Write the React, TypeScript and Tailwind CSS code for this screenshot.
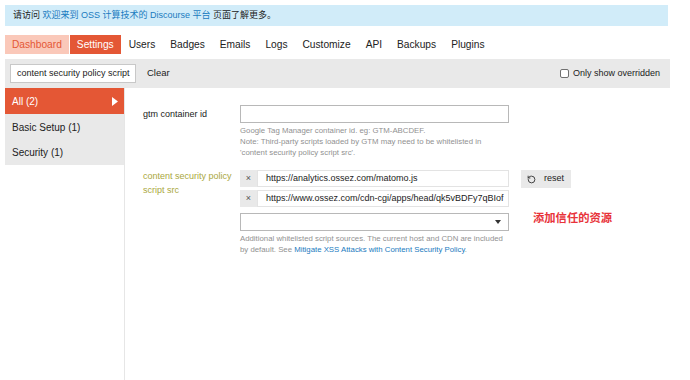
import React from "react";
import { RotateCcw } from "lucide-react";

const navItems = ["Users", "Badges", "Emails", "Logs", "Customize", "API", "Backups", "Plugins"];

export default function App() {
  return (
    <div className="w-[690px] h-[380px] bg-white overflow-hidden text-[#222] font-['Liberation_Sans','Noto_Sans_CJK_SC',sans-serif]">
      {/* banner */}
      <div className="ml-[5px] mt-[5px] w-[663px] h-[21px] bg-[#d1ecf9] flex items-center pl-[8px] text-[9px] whitespace-pre">
        <span>请访问 </span>
        <span className="text-[#1a7bc0]">欢迎来到 OSS 计算技术的 Discourse 平台</span>
        <span> 页面了解更多。</span>
      </div>

      {/* nav */}
      <div className="ml-[5px] mt-[9px] h-[19px] flex gap-[1px] text-[10.2px]">
        <div className="px-[7px] flex items-center bg-[#fac8b9] text-[#e45735]">Dashboard</div>
        <div className="px-[7px] flex items-center bg-[#e45735] text-white">Settings</div>
        {navItems.map((n) => (
          <div key={n} className="px-[7px] flex items-center text-[#222]">
            {n}
          </div>
        ))}
      </div>

      {/* filter bar */}
      <div className="ml-[5px] mt-[5px] w-[665px] h-[29px] bg-[#e9e9e9] flex items-center pl-[5px] pr-[10px]">
        <div className="w-[126px] h-[19px] bg-white border border-[#c8c8c8] flex items-center pl-[6px] text-[9px] whitespace-nowrap overflow-hidden">
          content security policy script
        </div>
        <div className="ml-[11px] text-[9.5px]">Clear</div>
        <div className="ml-auto flex items-center gap-[4px] text-[9px]">
          <span className="w-[9px] h-[9px] border border-[#707070] rounded-[2px] bg-white" />
          <span>Only show overridden</span>
        </div>
      </div>

      {/* main */}
      <div className="ml-[5px] flex h-[292px]">
        {/* sidebar */}
        <div className="w-[119px] flex flex-col text-[10px]">
          <div className="h-[26px] bg-[#e45735] text-white flex items-center pl-[7px] pr-[6px]">
            <span>All (2)</span>
            <svg className="ml-auto" width="6" height="9" viewBox="0 0 6 9">
              <path d="M0 0 L6 4.5 L0 9 Z" fill="white" />
            </svg>
          </div>
          <div className="h-[26px] bg-[#e9e9e9] flex items-center pl-[7px]">Basic Setup (1)</div>
          <div className="h-[25px] bg-[#e9e9e9] flex items-center pl-[7px]">Security (1)</div>
        </div>

        {/* content */}
        <div className="flex-1 border-l border-[#e6e6e6] pl-[18px] pt-[17px]">
          {/* row 1 */}
          <div className="flex">
            <div className="w-[97px] text-[9px] leading-[14px] pt-[2px]">gtm container id</div>
            <div className="w-[269px]">
              <div className="h-[18px] border border-[#b8b8b8] bg-white" />
              <div className="mt-[2px] text-[7.8px] leading-[11px] text-[#919191]">
                <div>Google Tag Manager container id. eg: GTM-ABCDEF.</div>
                <div>Note: Third-party scripts loaded by GTM may need to be whitelisted in</div>
                <div>'content security policy script src'.</div>
              </div>
            </div>
          </div>

          {/* row 2 */}
          <div className="flex mt-[12px]">
            <div className="w-[97px] text-[9px] leading-[14px] -mt-[1px] text-[#aaa73e]">
              content security policy
              <br />
              script src
            </div>
            <div className="w-[269px]">
              <div className="flex flex-col gap-[3px]">
                {[
                  "https://analytics.ossez.com/matomo.js",
                  "https://www.ossez.com/cdn-cgi/apps/head/qk5vBDFy7qBIof",
                ].map((u) => (
                  <div key={u} className="flex h-[17px]">
                    <div className="w-[17px] bg-[#e9e9e9] flex items-center justify-center text-[9px] text-[#555]">
                      ×
                    </div>
                    <div className="flex-1 border border-[#e3e3e3] bg-white flex items-center pl-[8px] text-[9px] whitespace-nowrap overflow-hidden">
                      {u}
                    </div>
                  </div>
                ))}
              </div>
              <div className="mt-[6px] h-[18px] border border-[#b8b8b8] bg-white flex items-center justify-end pr-[7px]">
                <svg width="6" height="4" viewBox="0 0 6 4">
                  <path d="M0 0 L6 0 L3 4 Z" fill="#333" />
                </svg>
              </div>
              <div className="mt-[2px] text-[7.8px] leading-[11px] text-[#919191]">
                <div>Additional whitelisted script sources. The current host and CDN are included</div>
                <div>
                  by default. See{" "}
                  <span className="text-[#1a7bc0]">Mitigate XSS Attacks with Content Security Policy</span>.
                </div>
              </div>
            </div>
            <div className="ml-[12px] flex flex-col">
              <div className="w-[50px] h-[18px] bg-[#e9e9e9] flex items-center pl-[6px] gap-[8px] text-[9px]">
                <RotateCcw size={9} strokeWidth={2.4} color="#333" />
                <span>reset</span>
              </div>
              <div className="ml-[12px] mt-[22px] text-[11.3px] font-bold text-[#e8333a] whitespace-nowrap">
                添加信任的资源
              </div>
            </div>
          </div>
        </div>
      </div>
    </div>
  );
}
